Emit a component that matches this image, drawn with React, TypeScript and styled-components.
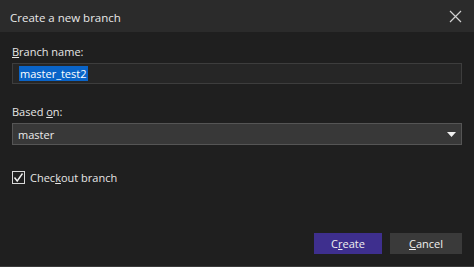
import styled, { createGlobalStyle } from "styled-components";

const GlobalStyle = createGlobalStyle`
  html, body {
    margin: 0;
    padding: 0;
    background: #1f1f1f;
  }
  body {
    font-family: "Open Sans", "Noto Sans", sans-serif;
    font-size: 11px;
    color: #e6e6e6;
  }
`;

export default function App() {
  return (
    <>
      <GlobalStyle />
      <Dialog>
        <TitleBar>
          <Title>Create a new branch</Title>
          <CloseButton aria-label="Close">
            <svg width="13" height="13" viewBox="0 0 13 13">
              <path d="M1 1L12 12M12 1L1 12" stroke="#d0d0d0" strokeWidth="1.2" />
            </svg>
          </CloseButton>
        </TitleBar>
        <Body>
          <Field>
            <Label>
              <u>B</u>ranch name:
            </Label>
            <TextBox>
              <Selected>master_test2</Selected>
            </TextBox>
          </Field>
          <Field>
            <Label>
              Based <u>o</u>n:
            </Label>
            <Select>
              <span>master</span>
              <svg width="9" height="5" viewBox="0 0 9 5">
                <path d="M0 0H9L4.5 5Z" fill="#f0f0f0" />
              </svg>
            </Select>
          </Field>
          <CheckRow>
            <CheckBox>
              <svg width="11" height="11" viewBox="0 0 11 11">
                <path d="M1.5 5.5L4.2 9L9.5 1.5" stroke="#f0f0f0" strokeWidth="1.4" fill="none" />
              </svg>
            </CheckBox>
            <span>
              Chec<u>k</u>out branch
            </span>
          </CheckRow>
          <Footer>
            <Button $primary>
              C<u>r</u>eate
            </Button>
            <Button>
              <u>C</u>ancel
            </Button>
          </Footer>
        </Body>
      </Dialog>
    </>
  );
}

const Dialog = styled.div`
  width: 474px;
  height: 267px;
  display: flex;
  flex-direction: column;
  background: #1f1f1f;
  box-sizing: border-box;
  border-bottom: 1px solid #3a3a3a;
`;

const TitleBar = styled.div`
  height: 32px;
  flex-shrink: 0;
  display: flex;
  align-items: center;
  justify-content: space-between;
  background: #2b2b2b;
  padding: 0 12px 0 10px;
`;

const Title = styled.div`
  color: #e8e8e8;
  font-size: 11.5px;
  transform: translateY(1px);
`;

const CloseButton = styled.div`
  display: flex;
  align-items: center;
  justify-content: center;
  width: 14px;
  height: 14px;
`;

const Body = styled.div`
  flex: 1;
  display: flex;
  flex-direction: column;
  padding: 12px 12px 12px 12px;
`;

const Field = styled.div`
  display: flex;
  flex-direction: column;
  gap: 3px;
  margin-bottom: 20px;
`;

const Label = styled.div`
  color: #e6e6e6;
  line-height: 16px;
`;

const TextBox = styled.div`
  height: 21px;
  box-sizing: border-box;
  border: 1px solid #3d3d3d;
  background: #262626;
  display: flex;
  align-items: center;
  padding: 0 6px;
`;

const Selected = styled.span`
  background: #0a64c8;
  color: #ffffff;
  line-height: 15px;
  padding: 0 1px;
`;

const Select = styled.div`
  height: 22px;
  box-sizing: border-box;
  border: 1px solid #555555;
  background: #383838;
  display: flex;
  align-items: center;
  justify-content: space-between;
  padding: 0 5px 0 5px;
  color: #ececec;
`;

const CheckRow = styled.div`
  display: flex;
  align-items: center;
  gap: 5px;
  margin-top: 5px;
  color: #e6e6e6;
`;

const CheckBox = styled.div`
  width: 13px;
  height: 13px;
  box-sizing: border-box;
  border: 1px solid #d8d8d8;
  display: flex;
  align-items: center;
  justify-content: center;
`;

const Footer = styled.div`
  margin-top: auto;
  display: flex;
  justify-content: flex-end;
  gap: 8px;
`;

const Button = styled.div<{ $primary?: boolean }>`
  width: ${(p) => (p.$primary ? "68px" : "72px")};
  height: 21px;
  display: flex;
  align-items: center;
  justify-content: center;
  background: ${(p) => (p.$primary ? "#3e2f8e" : "#3a3a3a")};
  color: #f0f0f0;
`;
